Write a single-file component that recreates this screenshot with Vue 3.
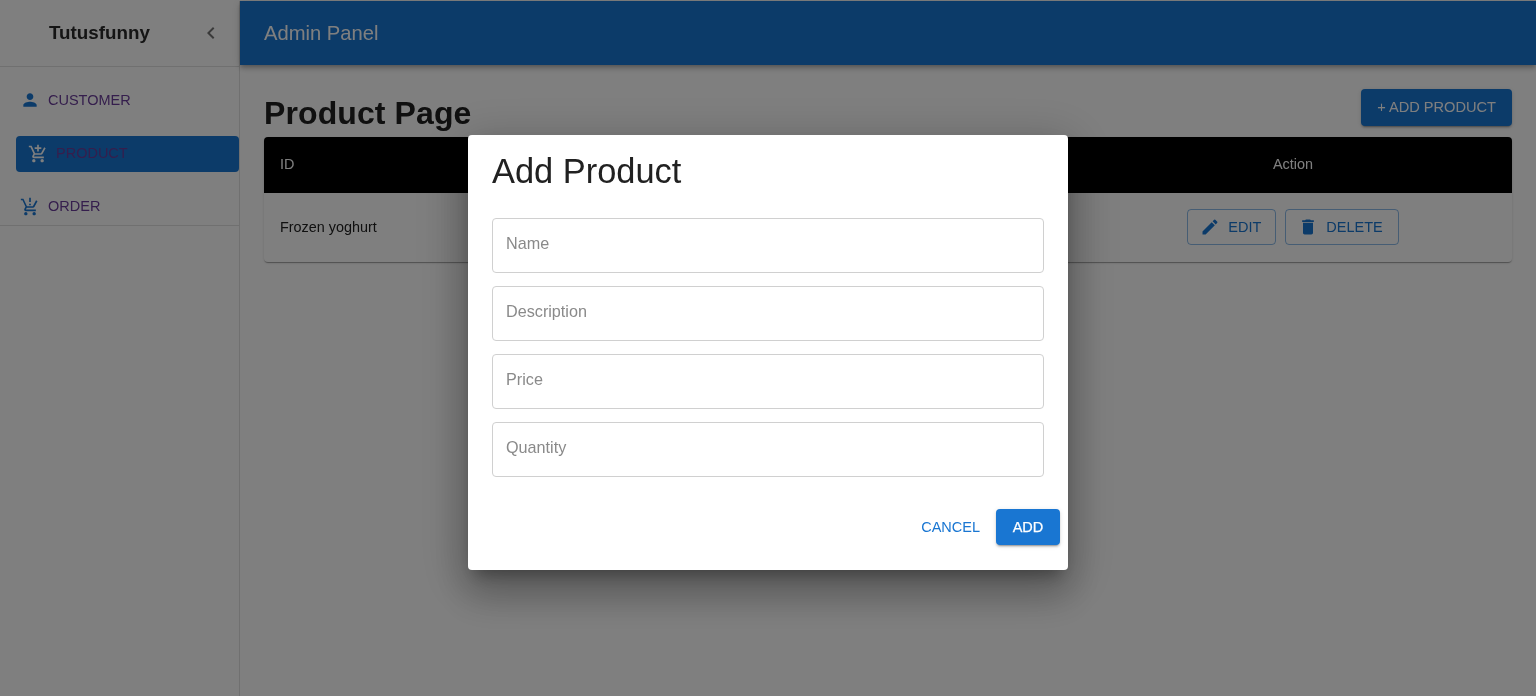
<script setup>
const paths = {
  person: 'M12 12c2.21 0 4-1.79 4-4s-1.79-4-4-4-4 1.79-4 4 1.79 4 4 4zm0 2c-2.67 0-8 1.34-8 4v2h16v-2c0-2.66-5.33-4-8-4z',
  add: 'M11 9h2V6h3V4h-3V1h-2v3H8v2h3v3zm-4 9c-1.1 0-1.99.9-1.99 2S5.9 22 7 22s2-.9 2-2-.9-2-2-2zm10 0c-1.1 0-1.99.9-1.99 2s.89 2 1.99 2 2-.9 2-2-.9-2-2-2zm-9.83-3.25.03-.12.9-1.63h7.45c.75 0 1.41-.41 1.75-1.03l3.86-7.01L19.42 4h-.01l-1.1 2-2.76 5H8.53l-.13-.27L6.16 6l-.95-2-.94-2H1v2h2l3.6 7.59-1.35 2.45c-.16.28-.25.61-.25.96 0 1.1.9 2 2 2h12v-2H7.42c-.13 0-.25-.11-.25-.25z',
  order: 'M13 10h-2V8h2v2zm0-4h-2V1h2v5zM7 18c-1.1 0-1.99.9-1.99 2S5.9 22 7 22s2-.9 2-2-.9-2-2-2zm10 0c-1.1 0-1.99.9-1.99 2s.89 2 1.99 2 2-.9 2-2-.9-2-2-2zm-9.83-3.25.03-.12.9-1.63h7.45c.75 0 1.41-.41 1.75-1.03L21 4.96 19.25 4l-3.86 7H8.37L4.13 2H1v2h2l3.6 7.59-1.35 2.44C4.52 15.37 5.48 17 7 17h12v-2H7.42c-.13 0-.25-.11-.25-.25z',
  chevron: 'M15.41 7.41 14 6l-6 6 6 6 1.41-1.41L10.83 12z',
  edit: 'M3 17.25V21h3.75L17.81 9.94l-3.75-3.75L3 17.25zM20.71 7.04c.39-.39.39-1.02 0-1.41l-2.34-2.34a.9959.9959 0 0 0-1.41 0l-1.83 1.83 3.75 3.75 1.83-1.83z',
  trash: 'M6 19c0 1.1.9 2 2 2h8c1.1 0 2-.9 2-2V7H6v12zM19 4h-3.5l-1-1h-5l-1 1H5v2h14V4z'
}
const fields = ['Name', 'Description', 'Price', 'Quantity']
</script>

<template>
  <div class="app">
    <aside class="sidebar">
      <div class="brand">
        <span class="brand-name">Tutusfunny</span>
        <svg class="chev" viewBox="0 0 24 24"><path :d="paths.chevron" /></svg>
      </div>
      <nav class="nav">
        <a class="nav-item customer" href="#">
          <svg class="nav-icon" viewBox="0 0 24 24"><path :d="paths.person" /></svg>
          <span>CUSTOMER</span>
        </a>
        <a class="nav-item product" href="#">
          <svg class="nav-icon" viewBox="0 0 24 24"><path :d="paths.add" /></svg>
          <span>PRODUCT</span>
        </a>
        <a class="nav-item order" href="#">
          <svg class="nav-icon" viewBox="0 0 24 24"><path :d="paths.order" /></svg>
          <span>ORDER</span>
        </a>
      </nav>
    </aside>

    <div class="main">
      <header class="topbar">Admin Panel</header>
      <main class="content">
        <div class="page-head">
          <h1>Product Page</h1>
          <button class="add-btn">+ ADD PRODUCT</button>
        </div>
        <div class="table">
          <div class="row head">
            <span class="c-id">ID</span>
            <span class="c-action">Action</span>
          </div>
          <div class="row body">
            <span class="c-id">Frozen yoghurt</span>
            <span class="c-action actions">
              <button class="out-btn edit">
                <svg viewBox="0 0 24 24"><path :d="paths.edit" /></svg>
                EDIT
              </button>
              <button class="out-btn del">
                <svg viewBox="0 0 24 24"><path :d="paths.trash" /></svg>
                DELETE
              </button>
            </span>
          </div>
        </div>
      </main>
    </div>

    <div class="overlay">
      <section class="dialog">
        <h2>Add Product</h2>
        <div class="fields">
          <input v-for="f in fields" :key="f" class="field" :placeholder="f" />
        </div>
        <div class="dialog-actions">
          <button class="cancel">CANCEL</button>
          <button class="confirm">ADD</button>
        </div>
      </section>
    </div>
  </div>
</template>

<style>
html, body { margin: 0; background: #fff; }
</style>

<style scoped>
.app {
  display: flex;
  height: 695px;
  padding-top: 1px;
  overflow: hidden;
  font-family: "Liberation Sans", Arial, sans-serif;
  color: #212121;
  filter: blur(.4px);
}
.sidebar {
  width: 239px;
  flex: none;
  border-right: 1px solid #e0e0e0;
}
.brand {
  height: 66px;
  box-sizing: border-box;
  border-bottom: 1px solid #e0e0e0;
  display: flex;
  align-items: center;
  justify-content: space-between;
  padding: 0 16px 2px 49px;
}
.brand-name { font-size: 18.8px; font-weight: 700; color: #2a2a2a; }
.chev { width: 24px; height: 24px; fill: #757575; }
.nav {
  border-bottom: 1px solid #e0e0e0;
  height: 159px;
  display: flex;
  flex-direction: column;
  padding-top: 16px;
  box-sizing: border-box;
}
.nav-item {
  display: flex;
  align-items: center;
  height: 36px;
  font-size: 14.5px;
  color: #6a3d9a;
  text-decoration: none;
}
.nav-item span { margin-top: -2px; }
.nav-icon { width: 20px; height: 20px; fill: #1976d2; margin-right: 8px; flex: none; }
.customer { padding-left: 20px; }
.customer .nav-icon { margin-top: -2px; }
.product {
  margin: 17px 0 0 16px;
  padding-left: 12px;
  background: #1976d2;
  border-radius: 4px;
}
.product .nav-icon { fill: #fff; }
.order { margin-top: 17px; padding-left: 20px; }

.main { flex: 1; min-width: 0; display: flex; flex-direction: column; }
.topbar {
  height: 64px;
  flex: none;
  background: #1976d2;
  color: #fff;
  font-size: 20.2px;
  padding: 0 24px;
  box-sizing: border-box;
  display: flex;
  align-items: center;
  box-shadow: 0 2px 4px -1px rgba(0,0,0,.2), 0 4px 5px rgba(0,0,0,.14), 0 1px 10px rgba(0,0,0,.12);
}
.content { padding: 24px 24px 0; }
.page-head { display: flex; justify-content: space-between; align-items: flex-start; height: 48px; }
h1 { margin: 6px 0 0; font-size: 32px; line-height: 37px; font-weight: 700; letter-spacing: .1px; color: #212121; }
.add-btn {
  height: 37px;
  padding: 0 16px 2px;
  border: 0;
  border-radius: 4px;
  background: #1976d2;
  color: #fff;
  font: 14.6px "Liberation Sans", Arial, sans-serif;
  box-shadow: 0 3px 1px -2px rgba(0,0,0,.2), 0 2px 2px rgba(0,0,0,.14), 0 1px 5px rgba(0,0,0,.12);
}
.table {
  border-radius: 4px;
  overflow: hidden;
  background: #fff;
  box-shadow: 0 2px 1px -1px rgba(0,0,0,.2), 0 1px 1px rgba(0,0,0,.14), 0 1px 3px rgba(0,0,0,.12);
}
.row { display: flex; align-items: center; font-size: 14.4px; padding: 0 16px; box-sizing: border-box; }
.head { height: 56px; background: #000; color: #fff; padding-bottom: 2px; }
.body { height: 69px; padding-bottom: 2px; }
.c-id { flex: 1; }
.c-action { width: 406px; text-align: center; }
.actions { display: flex; justify-content: center; gap: 9px; }
.out-btn {
  height: 36px;
  display: inline-flex;
  align-items: center;
  gap: 8px;
  padding: 0 15px 0 12px;
  border: 1px solid rgba(25,118,210,.5);
  border-radius: 4px;
  background: transparent;
  color: #1976d2;
  font: 14.5px "Liberation Sans", Arial, sans-serif;
}
.edit { padding-right: 14px; }
.out-btn svg { width: 20px; height: 20px; fill: currentColor; }

.overlay {
  position: fixed;
  inset: 0;
  background: rgba(0,0,0,.5);
  display: flex;
  justify-content: center;
  align-items: flex-start;
  padding-top: 135px;
  box-sizing: border-box;
}
.dialog {
  width: 600px;
  height: 435px;
  box-sizing: border-box;
  background: #fff;
  border-radius: 4px;
  padding: 0 8px 0 24px;
  box-shadow: 0 11px 15px -7px rgba(0,0,0,.3), 0 24px 38px 3px rgba(0,0,0,.2), 0 9px 46px 8px rgba(0,0,0,.18);
}
h2 {
  margin: 0;
  padding-top: 16px;
  height: 83px;
  box-sizing: border-box;
  font-size: 34.4px;
  line-height: 40px;
  font-weight: 400;
  color: #212121;
}
.fields { display: flex; flex-direction: column; gap: 13px; width: 552px; }
.field {
  height: 55px;
  box-sizing: border-box;
  border: 1px solid #d0d0d0;
  border-radius: 4px;
  padding: 0 13px 4px;
  outline: none;
  font: 16.2px "Liberation Sans", Arial, sans-serif;
  color: #212121;
}
.field::placeholder { color: #8a8a8a; opacity: 1; }
.dialog-actions { display: flex; justify-content: flex-end; align-items: center; gap: 16px; margin-top: 32px; }
.cancel {
  background: none;
  border: 0;
  padding: 0;
  color: #1976d2;
  font: 14.5px "Liberation Sans", Arial, sans-serif;
}
.confirm {
  width: 64px;
  height: 36px;
  border: 0;
  border-radius: 4px;
  background: #1976d2;
  color: #fff;
  font: 14.5px "Liberation Sans", Arial, sans-serif;
  -webkit-text-stroke: .25px #fff;
  box-shadow: 0 3px 1px -2px rgba(0,0,0,.2), 0 2px 2px rgba(0,0,0,.14), 0 1px 5px rgba(0,0,0,.12);
}
</style>
